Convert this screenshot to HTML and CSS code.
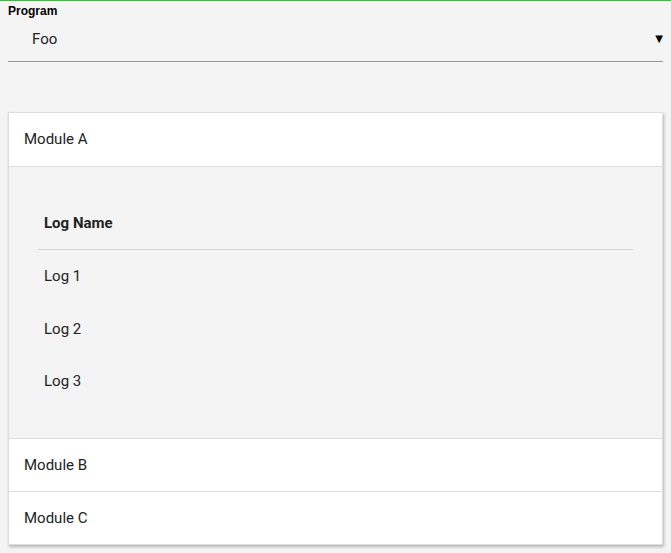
FILE: index.html
```html
<!DOCTYPE html>
<html>
<head>
<meta charset="utf-8">
<link rel="stylesheet" href="styles.css">
</head>
<body>
<div class="page">
  <div class="field">
    <label class="field-label">Program</label>
    <div class="select">
      <span class="select-value">Foo</span>
      <span class="select-arrow">&#9660;</span>
    </div>
  </div>

  <div class="accordion">
    <div class="panel open">
      <div class="panel-header first">Module A</div>
      <div class="panel-body">
        <table class="logs">
          <thead>
            <tr><th>Log Name</th></tr>
          </thead>
          <tbody>
            <tr><td>Log 1</td></tr>
            <tr><td>Log 2</td></tr>
            <tr><td>Log 3</td></tr>
          </tbody>
        </table>
      </div>
    </div>
    <div class="panel">
      <div class="panel-header">Module B</div>
    </div>
    <div class="panel">
      <div class="panel-header">Module C</div>
    </div>
  </div>
</div>
</body>
</html>
```

FILE: styles.css
```css
html, body {
  margin: 0;
  padding: 0;
}
body {
  background: #f4f4f4;
  border-top: 1px solid #4caf50;
  font-family: Roboto, "Liberation Sans", sans-serif;
  color: #222;
}
.page {
  padding: 0 8px 8px 8px;
}
.field {
  display: flex;
  flex-direction: column;
}
.field-label {
  font-family: "Liberation Sans", Arial, sans-serif;
  font-weight: bold;
  font-size: 12px;
  line-height: 14px;
  padding-top: 3px;
  color: #000;
}
.select {
  display: flex;
  align-items: center;
  justify-content: space-between;
  border-bottom: 1px solid #999;
  box-sizing: border-box;
  height: 44px;
}
.select-value {
  font-size: 15px;
  padding-left: 24px;
  padding-bottom: 1px;
}
.select-arrow {
  font-family: "DejaVu Sans", sans-serif;
  font-size: 10px;
  color: #000;
  padding-bottom: 3px;
}
.accordion {
  margin-top: 50px;
  background: #fff;
  border: 1px solid #ddd;
  box-shadow: 1px 2px 3px rgba(0,0,0,0.25);
}
.panel + .panel {
  border-top: 1px solid #ddd;
}
.panel-header {
  height: 52px;
  box-sizing: border-box;
  display: flex;
  align-items: center;
  padding-left: 15px;
  font-size: 15px;
  background: #fff;
}
.panel-header.first {
  height: 53px;
  padding-bottom: 2px;
}
.panel-body {
  border-top: 1px solid #ddd;
  background: #f4f4f4;
  padding: 30px 29px 30px 29px;
}
.logs {
  width: 100%;
  border-collapse: collapse;
  font-size: 15px;
}
.logs th {
  text-align: left;
  font-weight: bold;
  height: 52px;
  padding: 0 0 0 6px;
  border-bottom: 1px solid #d4d4d4;
}
.logs td {
  height: 52.5px;
  padding: 0 0 0 6px;
}
```
